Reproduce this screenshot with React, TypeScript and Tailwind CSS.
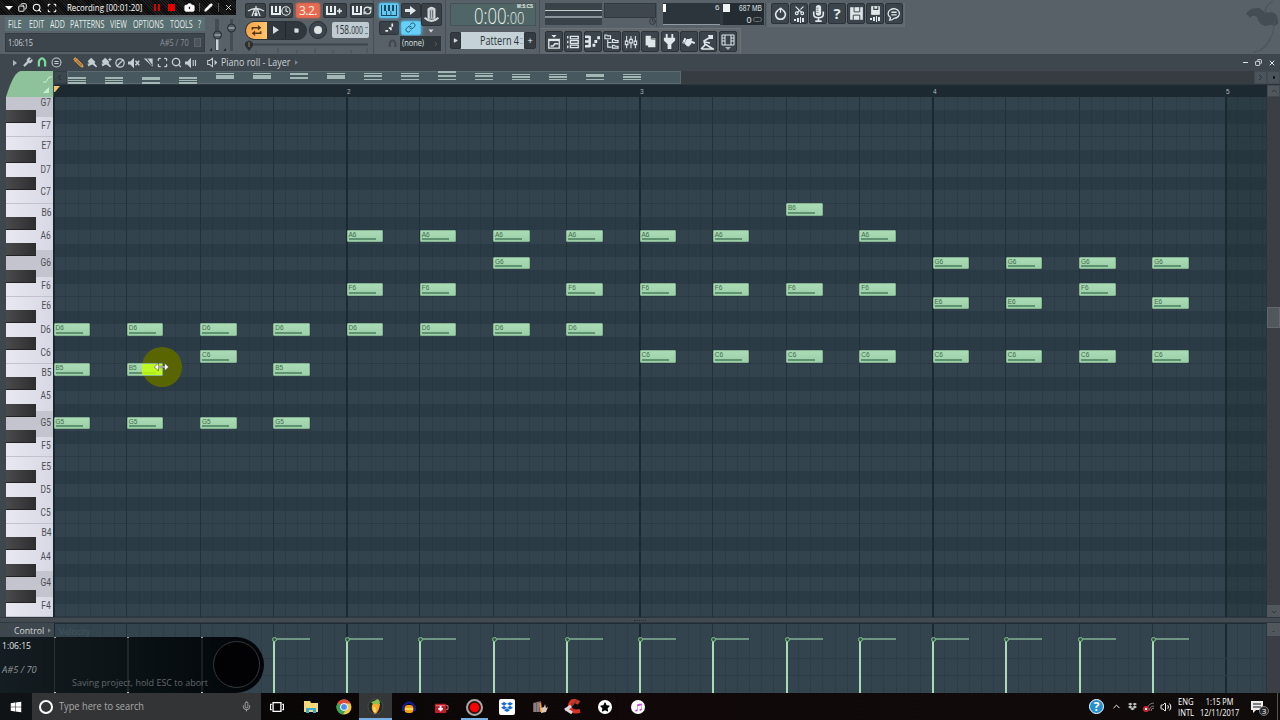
import React from 'react';
import {
  Ban, Camera, ChevronDown, ChevronLeft, ChevronRight, ChevronUp, Copy, Link,
  Mic, Minus, Pencil, Scan, Scissors, Search, Volume2, Wrench, X, Clock, RefreshCw, Play, Square,
} from 'lucide-react';
import { FaDropbox, FaWindows, FaStar, FaItunesNote, FaHandPointRight } from 'react-icons/fa';

const BEAT = 73.25;
const ROW = 13.35;

// semitones counted down from G7, the top row of the roll
const PITCH: Record<string, number> = {
  B6: 8, A6: 10, G6: 12, F6: 14, E6: 15, D6: 17, C6: 19, B5: 20, G5: 24,
};

const CHORDS = [
  'D6 B5 G5', 'D6 B5 G5', 'D6 C6 G5', 'D6 B5 G5',
  'A6 F6 D6', 'A6 F6 D6', 'A6 G6 D6', 'A6 F6 D6',
  'A6 F6 C6', 'A6 F6 C6', 'B6 F6 C6', 'A6 F6 C6',
  'G6 E6 C6', 'G6 E6 C6', 'G6 F6 C6', 'G6 E6 C6',
].map((chord) => chord.split(' '));

const WHITE_KEYS = [
  'G7', 'F7', 'E7', 'D7', 'C7', 'B6', 'A6', 'G6', 'F6', 'E6', 'D6', 'C6',
  'B5', 'A5', 'G5', 'F5', 'E5', 'D5', 'C5', 'B4', 'A4', 'G4', 'F4',
];

const ROWS = Array.from({ length: 39 }, (_, i) => i);
const isBlack = (row: number) => [1, 4, 6, 9, 11].includes(row % 12);

const keyHeight = (name: string, i: number) => {
  if (i === 0) return 1.5 * ROW;
  return ('DAG'.includes(name[0]) ? 2 : 1.5) * ROW;
};

const Narrow = ({ children, className = '' }: { children: React.ReactNode; className?: string }) => (
  <span className={`inline-block origin-left whitespace-nowrap ${className}`}>{children}</span>
);

const Btn = ({ children, className = 'h-[21px] w-[18px] bg-[#3b444b] text-[#dfe7ea]' }: {
  children?: React.ReactNode;
  className?: string;
}) => (
  <div className={`flex shrink-0 items-center justify-center rounded-[2px] border border-[#2b3339] ${className}`}>
    {children}
  </div>
);

const Glyph = ({ children, size = 14, className = '' }: {
  children: React.ReactNode;
  size?: number;
  className?: string;
}) => (
  <svg width={size} height={size} viewBox="0 0 16 16" fill="none" stroke="currentColor" strokeWidth="1.5" className={`shrink-0 ${className}`}>
    {children}
  </svg>
);

const Keys = ({ children }: { children?: React.ReactNode }) => (
  <svg width="18" height="13" viewBox="0 0 18 13" fill="none" stroke="#e6eef0" strokeWidth="1.5">
    <path d="M1 2v8h8V2M5 2v6" strokeWidth="2" />
    {children}
  </svg>
);

const WaveDots = () => (
  <span className="mt-px flex h-[6px] items-center gap-px">
    <i className="h-[2px] w-[2px] bg-[#dfe7ea]" />
    <i className="h-[4px] w-[2px] bg-[#dfe7ea]" />
    <i className="h-[6px] w-[1px] bg-[#dfe7ea]" />
    <i className="h-[4px] w-[2px] bg-[#dfe7ea]" />
  </span>
);

const BrushGlyph = ({ plus }: { plus?: boolean }) => (
  <Glyph size={11}>
    <path d="M1 6l5-5 6 6-1 2 4 5-2 1-5-4-3 1z" fill="currentColor" stroke="none" />
    <path d="M1 10l3 1-2 2" strokeWidth="2" />
    {plus && <path d="M13 1v5M10.500 3.500h5" />}
  </Glyph>
);

const RecorderBar = () => (
  <div className="flex h-[15px] w-[236px] items-center bg-[repeating-linear-gradient(45deg,#090909_0_1px,#202020_1px_2px)] pl-[5px] text-white">
    <div className="flex w-[62px] items-center gap-[5px]">
      <svg width="8" height="6" viewBox="0 0 8 6" fill="white"><path d="M0 1h8L4 5z" /></svg>
      <Copy size={9} strokeWidth={2.5} className="-scale-x-100" />
      <Search size={10} strokeWidth={2.5} />
      <Scan size={10} strokeWidth={2.5} />
    </div>
    <div className="w-[87px] font-[Open_Sans,sans-serif] text-[9.5px] leading-[14px]">
      <Narrow className="scale-x-[.83]">Recording [00:01:20]</Narrow>
    </div>
    <div className="flex w-[14px] gap-[2px]"><i className="h-[7px] w-[2px] bg-[#d90000]" /><i className="h-[7px] w-[2px] bg-[#d90000]" /></div>
    <i className="mr-[9px] h-[7px] w-[7px] bg-[#e60000]" />
    <Camera size={11} fill="white" stroke="white" className="[&>circle]:fill-black" />
    <i className="ml-[4px] h-[9px] w-px bg-[#555]" />
    <Pencil size={9} fill="white" className="ml-[4px]" />
    <i className="ml-[5px] h-[9px] w-px bg-[#555]" />
    <X size={9} className="ml-[5px]" />
  </div>
);

const MENU: [string, string][] = [
  ['FILE', 'w-[21px]'], ['EDIT', 'w-[21px]'], ['ADD', 'w-[20px]'], ['PATTERNS', 'w-[39.5px]'],
  ['VIEW', 'w-[23.5px]'], ['OPTIONS', 'w-[37px]'], ['TOOLS', 'w-[28px]'], ['?', 'w-[5px]'],
];

const MainMenu = () => (
  <div className="flex h-[39px] w-[243px] pl-[5px] pt-[2px]">
    <div className="w-[200px]">
      <div className="flex h-[14px] items-center bg-[#5a6f71] pl-[3px] text-[11px] leading-[14px] text-[#e2ebe9]">
        {MENU.map(([label, width]) => (
          <div key={label} className={width}><Narrow className="scale-x-[.65]">{label}</Narrow></div>
        ))}
      </div>
      <div className="mt-[2px] flex h-[19px] items-center justify-between border border-[#343c43] bg-[#3d454c] px-[2px] text-[9px] text-[#c9d0d3]">
        <Narrow className="scale-x-[.82]">1:06:15</Narrow>
        <div className="flex w-[42px] items-center text-[#8b9398]">
          <div className="w-[34px]"><Narrow className="scale-x-[.82]">A#5 / 70</Narrow></div>
          <i className="h-[9px] w-[7px] shrink-0 border border-[#5c646a] bg-[#4c545a]" />
        </div>
      </div>
    </div>
    <svg width="34" height="36" viewBox="0 0 34 36" className="ml-[3px]">
      <rect x="7" y="2" width="4" height="32" fill="#434c53" />
      <rect x="22" y="2" width="3" height="32" fill="#434c53" />
      <rect x="8" y="20" width="2.500" height="13" fill="#cbd3d6" />
      <circle cx="9.500" cy="18" r="4" fill="#505a61" stroke="#242b31" />
      <circle cx="23.500" cy="11" r="4" fill="#505a61" stroke="#242b31" />
      <path d="M6.500 18h6M20.500 11h6" stroke="#c2cacd" />
      <path d="M2 34v-1l2-2v3zM16 34v-1l2-2v3z" fill="#20282e" />
    </svg>
  </div>
);

const Transport = () => (
  <div className="w-[131px] border-r border-[#474f56] pl-[2px] pt-[3px]">
    <div className="flex gap-[3px]">
      <Btn className="h-[15px] w-[21px] bg-[#3a4248]">
        <svg width="18" height="12" viewBox="0 0 18 12" fill="none" stroke="#dce4e6" strokeWidth="1.300"><path d="M1 6q8-5 16 0M9 1v9M5 11l3-8M13 11l-3-8" /><path d="M7.500 8h3v3h-3z" fill="#dce4e6" stroke="none" /></svg>
      </Btn>
      <Btn className="h-[15px] w-[24px] bg-[#3a4248]"><Keys /><Clock size={10} strokeWidth={2.5} color="#e6eef0" className="-ml-[8px]" /></Btn>
      <Btn className="h-[15px] w-[24px] border-[#d8674f] bg-[#e56a50] text-[12px] tracking-[-.5px] text-[#fff0e2] shadow-[0_0_3px_#d26855]">3.2.</Btn>
      <Btn className="h-[15px] w-[24px] bg-[#3a4248]"><Keys><path d="M11 7h5M13.500 4.500v5" /></Keys></Btn>
      <Btn className="h-[15px] w-[24px] bg-[#3a4248]"><Keys /><RefreshCw size={9} strokeWidth={3} color="#e6eef0" className="-ml-[7px]" /></Btn>
    </div>
    <div className="mt-[2px] flex h-[20px] items-center">
      <div className="flex h-[19px] w-[62px] overflow-hidden rounded-full border border-[#2b3238] bg-[#30383e]">
        <div className="flex w-[21px] items-center justify-center bg-gradient-to-r from-[#f6a348] to-[#ffc66c] text-[#563714]">
          <Glyph size={11}><path d="M2 7V4h8M14 9v3H6" strokeWidth="2.400" /><path d="M10 0l5 4-5 4zM6 8l-5 4 5 4z" fill="currentColor" stroke="none" /></Glyph>
        </div>
        <div className="flex w-[20px] items-center justify-center border-r border-[#20272c]">
          <svg width="6" height="8" viewBox="0 0 6 8" fill="#d8dfe1"><path d="M0 0l6 4-6 4z" /></svg>
        </div>
        <div className="flex w-[20px] items-center justify-center"><Square size={5} fill="#d8dfe1" stroke="#d8dfe1" /></div>
      </div>
      <div className="ml-[2px] flex h-[18px] w-[18px] items-center justify-center rounded-full border border-[#272f35] bg-[#3c454b]"><i className="h-[8px] w-[8px] rounded-full bg-[#dce2e4]" /></div>
      <div className="ml-[5px] flex h-[16px] w-[37px] items-center rounded-[2px] bg-[#bfcbd0] pl-[3px] text-[#273137]">
        <div className="w-[28px] text-[12px] leading-[14px]"><Narrow className="scale-x-[.68]">158.<span className="text-[10px]">000</span></Narrow></div>
        <i className="ml-[2px] h-[7px] w-[3px] border-y border-[#75848b]" />
      </div>
    </div>
    <svg width="126" height="14" viewBox="0 0 126 14">
      <path d="M3 4.500h120" stroke="#3d464c" strokeWidth="2" />
      <path d="M11 13v-3M33 13V8M52 13v-3M70 13V8M88 13v-3M106 13v-3M122 13V8" stroke="#484f56" />
      <path d="M0 3q4-5 8 0v3l-4 5-4-5z" fill="#2b3034" /><path d="M4 2v5" stroke="#a77b4b" />
    </svg>
  </div>
);

const SnapPanel = () => (
  <div className="w-[72px] border-r border-[#474f56] pl-[5px] pt-[3px]">
    <div className="flex h-[33px]">
      <div className="grid w-[42px] grid-cols-2 gap-x-[1px] gap-y-[1px]">
        <Btn className="h-[15px] w-[20px] border-[#52bfe8] bg-[#65c7f0] shadow-[0_0_3px_#58c7fa]">
          <svg width="16" height="11" viewBox="0 0 16 11" fill="#174863"><path d="M0 0h1v11H0zM15 0h1v11h-1zM3 0h2v6H3zM7 0h2v6H7zM11 0h2v6h-2zM0 10h16v1H0zM5 6h.800v4H5zM9.500 6h.800v4h-.800z" /></svg>
        </Btn>
        <Btn className="h-[15px] w-[20px] bg-[#3a4248]"><svg width="11" height="9" viewBox="0 0 11 9" fill="#e3e9eb"><path d="M0 3h5V0l6 4.500L5 9V6H0z" /></svg></Btn>
        <Btn className="h-[14px] w-[20px] bg-[#3a4248] text-[#e3e9eb]"><Glyph size={11}><path d="M2 13h4M7 9h3v3M12 2v5" strokeWidth="2.500" /></Glyph></Btn>
        <Btn className="h-[14px] w-[20px] border-[#55c1eb] bg-[#68cff8] shadow-[0_0_4px_#58c7fa]"><Link size={11} color="#17536b" /></Btn>
      </div>
      <div>
        <Btn className="h-[23px] w-[21px] bg-[#3a4248] text-[#d2d9dc]">
          <Glyph size={17}><path d="M5 12V3q3-3 6 0v9" fill="#bcc6ca" /><path d="M7 4v7M9 4v7" stroke="#697278" strokeWidth="1" /><path d="M1.500 11q6.500 6 13 0" strokeWidth="2" /></Glyph>
        </Btn>
        <svg width="21" height="9" viewBox="0 0 21 9"><path d="M7.500 3.500h5l-2.500 3z" fill="#d7dee0" /></svg>
      </div>
    </div>
    <div className="flex h-[15px] items-center">
      <Glyph size={9} className="ml-[9px] text-[#41494f]"><path d="M3 14V7q5-9 10 0v7" strokeWidth="4" /></Glyph>
      <div className="ml-[3px] flex h-[15px] w-[41px] items-center justify-between bg-[#30373c] px-[2px] text-[8.5px] text-[#dce2e4]">
        <div className="w-[24px]"><Narrow className="scale-x-[.87]">(none)</Narrow></div><ChevronRight size={6} className="text-[#899298]" />
      </div>
    </div>
  </div>
);

const TimePanel = () => (
  <div className="w-[94px] border-r border-[#474f56] pl-[4px] pt-[3px]">
    <div className="relative h-[23px] w-[86px] border border-[#46545a] bg-[#506565] pl-[23px] text-[#e9f3ed]">
      <div className="text-[22px] leading-[22px] font-light"><Narrow className="scale-x-[.76]">0:00<span className="text-[17px]">:00</span></Narrow></div>
      <span className="absolute right-[2px] top-0 font-['Liberation_Sans',sans-serif] text-[4.500px] font-bold leading-[5px]">M:S:CS</span>
    </div>
    <div className="mt-[6px] flex h-[17px] w-[86px]">
      <Btn className="h-[17px] w-[11px] bg-[#343c42]"><Play size={5} fill="#ddd" stroke="#ddd" /></Btn>
      <div className="flex w-[63px] items-center bg-[#c5d2d7] pl-[19px] text-[12px] leading-[16px] text-[#2a353b]">
        <div className="w-[38px]"><Narrow className="scale-x-[.76]">Pattern 4</Narrow></div>
        <i className="ml-[2px] h-[6px] w-[3px] border-y border-[#9dafb6]" />
      </div>
      <Btn className="h-[17px] w-[12px] bg-[#343c42] text-[9px] text-white">+</Btn>
    </div>
  </div>
);

const ToolPanels = () => (
  <div className="w-[365px]">
    <div className="flex h-[28px] items-start pt-[3px]">
      <div className="flex h-[24px] w-[118px] gap-[2px] border-r border-[#474f56] pl-[5px]">
        <div className="h-[22px] w-[57px] bg-[#3a4249] pt-[7px]">
          <div className="h-px bg-[#c3cbce]" /><div className="mt-[5px] h-[2px] bg-[#8b9499]" />
        </div>
        <div className="w-[52px]">
          <div className="h-[15px] border border-[#31393f] bg-[#3e474e]" />
          <div className="flex justify-end"><Clock size={7} strokeWidth={3} color="#2d343a" /></div>
        </div>
      </div>
      <div className="flex h-[23px] w-[109px] border-r border-[#474f56] pl-[6px]">
        <div className="flex h-[22px] w-[101px] bg-[#252c31] text-[9px] leading-[10px] text-[#dce3e5]">
          <div className="flex w-[60px] flex-col justify-between border-r-[3px] border-[#313a41] bg-[#2c353c]">
            <div className="flex justify-between pr-[1px]"><i className="mt-px h-[8px] w-[3px] bg-white" /><span className="font-['Liberation_Sans',sans-serif] text-[8px]">6</span></div>
            <i className="h-px w-full bg-[#8f9ba0]" />
          </div>
          <div className="w-[41px]">
            <div className="flex h-[10px] gap-[8px]">
              <i className="mt-px h-[8px] w-[7px] shrink-0 bg-[#edf1f2]" />
              <svg width="25" height="10" viewBox="0 0 25 10" fill="#dce3e5" className="shrink-0 font-['Liberation_Sans',sans-serif] text-[8.500px]"><text x="1" y="8" textLength="23" lengthAdjust="spacingAndGlyphs">687 MB</text></svg>
            </div>
            <div className="mt-px flex h-[11px] items-center justify-end gap-[2px] pr-[2px]"><span className="font-['Liberation_Sans',sans-serif] text-[9px] leading-[10px]">0</span><i className="h-[5px] w-[9px] rounded-full border border-[#667077]" /></div>
          </div>
        </div>
      </div>
      <div className="ml-[1px] flex h-[24px] w-[138px] shrink-0 gap-[1px] border-r border-b border-[#656d73] bg-[#616a70] pl-[4px]">
        <Btn>
          <Glyph size={13}><path d="M5 4a6 6 0 1 0 6 0" strokeWidth="2" /><path d="M8 1v6M8 1L5 4M8 1l3 3" /></Glyph>
        </Btn>
        <Btn><div className="flex flex-col items-center"><Scissors size={11} strokeWidth={2.5} className="-rotate-90" /><WaveDots /></div></Btn>
        <Btn><Glyph size={17}><rect x="5.500" y="0" width="5" height="10" rx="2.500" fill="currentColor" stroke="none" /><path d="M3.500 6v3q0 3 4.500 3t4.500-3V6M8 12v3M5 15.200h6" /><path d="M6 3h2M6 5h2M6 7h2" stroke="#6a747a" strokeWidth=".800" /></Glyph></Btn>
        <Btn><span className="text-[15px] font-bold leading-none">?</span></Btn>
        <Btn><Glyph size={13}><path d="M1 1h14v14H1z" fill="currentColor" /><path d="M5 0v6h7V0M4 16v-6h8v6" stroke="#3b444b" strokeWidth="1.200" /></Glyph></Btn>
        <Btn><div className="flex flex-col items-center"><Glyph size={9}><path d="M1 1h14v14H1z" fill="currentColor" /><path d="M5 1v5h7V1" stroke="#3b444b" strokeWidth="2" /></Glyph><WaveDots /></div></Btn>
        <Btn><Glyph size={14}><path d="M3 15l1-3a6.500 5.500 0 1 1 4 1q-2 2-5 2zM5 6h6M5 9h6" /></Glyph></Btn>
      </div>
    </div>
    <div className="flex h-[26px] w-[201px] items-center gap-[1.300px] border-t border-r border-[#6b7379] bg-[#60686e] pl-[5px]">
      <Btn><Glyph><path d="M2 5h12v10H2z" /><path d="M2 6h12" strokeWidth="2" /><path d="M4 12.500h3l2-2.500h4" strokeWidth="1.800" /><path d="M5 0h6L8 3z" fill="currentColor" stroke="none" /></Glyph></Btn>
      <Btn><Glyph><path d="M5 1.500h9v3H5zM5 6.500h9v3H5zM5 11.500h9v3H5z" /><path d="M2 1v3M2 6.500v3M2 12v3" /></Glyph></Btn>
      <Btn><Glyph size={15}><path d="M0 3h5M0 8h5M0 13h5M5 2v12" strokeWidth="2.600" /><path d="M8 12h3M10 8h3M13 4h3" strokeWidth="3" /></Glyph></Btn>
      <Btn><Glyph size={15}><path d="M1 5V1h2l1 1h3v3zM4 6v8h4M4 9h4" strokeWidth="1.200" /><path d="M9 9V6h2l1 1h3v2zM9 15v-3h2l1 1h3v2z" strokeWidth="1.200" /></Glyph></Btn>
      <Btn><Glyph><path d="M3 1v14M8 1v14M13 1v14" strokeWidth="1.200" /><path d="M1.500 7h3v4h-3zM6.500 5h3v4h-3zM11.500 7h3v4h-3z" fill="#3b444b" strokeWidth="1.200" /></Glyph></Btn>
      <Btn><Glyph size={13}><path d="M2 1h7v3h5v11H5v-2H2z" fill="currentColor" stroke="none" /><path d="M9 0v5h5" stroke="#3b444b" strokeWidth="1" /></Glyph></Btn>
      <Btn><Glyph size={15}><path d="M4 0h2v4h4V0h2v4h2v3l-4 4v5H6v-5L2 7V4h2z" fill="currentColor" stroke="none" /></Glyph></Btn>
      <Btn><FaHandPointRight size={12} className="rotate-[25deg]" /></Btn>
      <Btn><Glyph size={16}><path d="M8 1h5v4H9z" fill="currentColor" stroke="none" /><path d="M9 4L4 7l1 4-4 4M5 10l8 5M2 15h12M5 8l5 1" strokeWidth="1.600" /></Glyph></Btn>
      <Btn><Glyph size={16}><path d="M2 1h12v10H2zM5 1v10M11 1v10M2 4h3M2 7h3M11 4h3M11 7h3" strokeWidth="1" /><path d="M5 13h6l-3 3z" fill="#aab3b7" stroke="none" /></Glyph></Btn>
    </div>
  </div>
);

const Toolbar = () => (
  <header className="flex h-[54px] bg-[#596168]">
    <div className="w-[243px]">
      <RecorderBar />
      <MainMenu />
    </div>
    <Transport />
    <SnapPanel />
    <TimePanel />
    <ToolPanels />
    <div className="flex flex-1 justify-end">
      <svg width="34" height="54" viewBox="0 0 34 54" fill="#454d54">
        <path d="M0 15q2-8 14-7 5 6 12 4 7 2 6 12l-4 2-3-1-6 1q-7-2-8-9-5-3-7 1l-2-3z" />
        <path d="M27 1q-8 4-8 13M28 22q0 20-15 29l-6 1" fill="none" stroke="#4e565c" strokeWidth="1.200" />
      </svg>
    </div>
  </header>
);

const RollHeader = () => (
  <div className="flex h-[17px] items-center bg-[#3f474e] pl-[13px] pr-[4px] text-[#c3ccd1]">
    <svg width="4" height="6" viewBox="0 0 4 6" fill="#aab4ba"><path d="M0 0l4 3-4 3z" /></svg>
    <div className="ml-[6px] flex w-[46px] gap-[4px]">
      <Wrench size={10} fill="currentColor" />
      <Glyph size={10} className="text-[#7ddb9d]"><path d="M3 15V7q5-10 10 0v8" strokeWidth="3.500" /></Glyph>
      <Glyph size={11}><circle cx="8" cy="8" r="6.500" /><path d="M5 6.500h6M5 9.500h6" /></Glyph>
    </div>
    <div className="ml-[4px] flex w-[134px] items-center gap-[3px]">
      <Pencil size={11} color="#f1ae50" fill="#a87535" className="-scale-x-100" />
      <BrushGlyph />
      <BrushGlyph plus />
      <Ban size={10} strokeWidth={3} className="rotate-90" />
      <Glyph size={12}><path d="M0 6h3l5-5v14l-5-5H0z" fill="currentColor" stroke="none" /><path d="M10 5l5 6M15 5l-5 6" strokeWidth="2" /></Glyph>
      <Glyph size={11}><path d="M1 2h13v12z" fill="currentColor" stroke="none" /><path d="M5 1l8 11" stroke="#3f474e" /></Glyph>
      <Scan size={11} strokeWidth={3} />
      <Search size={11} strokeWidth={3} />
      <Glyph size={12}><path d="M0 6h3l5-5v14l-5-5H0z" fill="currentColor" stroke="none" /><path d="M11 4v8M14 4v8" /></Glyph>
    </div>
    <Glyph size={11}><path d="M1 5h3l4-3v12l-4-3H1z" /><path d="M11 4l4 4-4 4z" fill="currentColor" stroke="none" /></Glyph>
    <div className="ml-[3px] w-[75px] text-[10px] leading-[15px] text-[#c9d1d5]"><Narrow className="scale-x-[.89]">Piano roll - Layer</Narrow></div>
    <svg width="3" height="5" viewBox="0 0 4 6" fill="#7d888f" className="-ml-px"><path d="M0 0l4 3-4 3z" /></svg>
    <div className="ml-auto flex items-center gap-[6px] text-[#dfe5e8]">
      <Minus size={7} strokeWidth={4} /><Copy size={7} strokeWidth={3} className="-scale-x-100" /><X size={8} strokeWidth={3} />
    </div>
  </div>
);

const MiniMap = () => (
  <div className="flex h-[13px]">
    <div className="flex w-[13px] items-center border border-[#333d44] bg-[#3d474e]"><ChevronLeft size={9} color="#161d22" /></div>
    <div className="relative w-[614px] border border-[#5b6a70] bg-[#47585f]">
      {CHORDS.map((chord, beat) =>
        chord.map((note) => (
          <i
            key={`${beat}${note}`}
            className="absolute h-[1.500px] w-[18px] bg-[#a3b8b5]"
            style={{ left: beat * 37 - 0.5, top: (PITCH[note] - 10) * 0.7 + 0.5 }}
          />
        )),
      )}
    </div>
    <div className="flex-1 bg-[#373c43]" />
    <div className="flex w-[13px] items-center justify-center border border-[#414a50] bg-[#4b545a]"><ChevronRight size={9} color="#1d2429" /></div>
    <div className="flex w-[13px] items-center justify-center border border-[#414a50] bg-[#4b545a]"><i className="h-[3px] w-[2px] bg-[#151b1f]" /></div>
  </div>
);

const Ruler = () => (
  <div className="flex h-[13px] border-t border-[#2c363c] bg-[#1c2930] font-['Liberation_Sans',sans-serif] text-[6.500px] leading-[14px] text-[#aab7bc]">
    <div className="w-[293px]"><svg width="7" height="9" viewBox="0 0 7 9"><path d="M0 1h6L1 7H0z" fill="#efc372" /></svg></div>
    {[2, 3, 4].map((bar) => <div key={bar} className="w-[293px]">{bar}</div>)}
    <div className="flex-1">5</div>
    <div className="flex w-[13px] items-center justify-center border border-[#41494f] bg-[#50585e]"><ChevronUp size={8} color="#20282d" /></div>
  </div>
);

const GridLines = () => (
  <>
    {Array.from({ length: 100 }, (_, i) => (
      <i
        key={i}
        className={`absolute inset-y-0 ${i % 24 === 0 ? 'w-[1.500px] bg-[#1a2a32]' : i % 6 === 0 ? 'w-px bg-[#20313a]' : 'w-px bg-[#22333d]/35'}`}
        style={{ left: Math.floor((i * BEAT) / 6 - 0.3) }}
      />
    ))}
  </>
);

const Keyboard = () => (
  <div className="relative h-[521px] w-[47px] overflow-hidden bg-[#e1e1ec]">
    {WHITE_KEYS.map((name, i) => (
      <div
        key={name}
        className={`flex items-center justify-end pr-[2px] font-[Roboto,sans-serif] text-[10.500px] leading-none text-[#4c4e55] ${
          name[0] === 'G' ? 'bg-[#c3c4cd]' : 'bg-gradient-to-r from-[#e8e8f1] to-[#d8d8e5]'
        } ${name[0] === 'F' || name[0] === 'C' ? 'border-b border-[#c1c2cd]' : ''} ${i === 0 ? 'pb-[7px]' : 'pb-px'}`}
        style={{ height: keyHeight(name, i) }}
      >
        <span className="inline-block origin-right scale-x-[.8]">{name}</span>
      </div>
    ))}
    {ROWS.filter(isBlack).map((row) => (
      <i
        key={row}
        className="absolute left-0 h-[13px] w-[30px] border-b border-[#222] bg-gradient-to-r from-[#4a4a4c] to-[#2e2e30]"
        style={{ top: row * ROW - 0.5 }}
      />
    ))}
  </div>
);

const Roll = () => (
  <div className="relative h-[521px] w-[1212px] overflow-hidden bg-[#34434e]">
    {ROWS.map((row) => (
      <div
        key={row}
        className={`${isBlack(row) ? 'bg-[#2b3b46]' : 'bg-[#33434e]'} ${[2, 7, 14, 19, 26, 31, 38].includes(row) ? 'border-b border-[#2b3a45]' : ''}`}
        style={{ height: ROW }}
      />
    ))}
    <GridLines />
    <div className="absolute inset-y-0 left-[1172px] right-0 bg-[#14262c]/25" />
    <div className="absolute left-[88px] top-[250px] h-[40px] w-[40px] rounded-full bg-[#596500]" />
    {CHORDS.map((chord, beat) =>
      chord.map((note) => (
        <div
          key={`${beat}${note}`}
          className="absolute h-[12.500px] w-[36.500px] overflow-hidden rounded-[1px] border border-[#84b18f] bg-gradient-to-b from-[#aadbb6] to-[#9cd0a8] pl-px font-['Liberation_Sans',sans-serif] text-[6.500px] leading-[8px] text-[#3f6b4b]"
          style={{ left: beat * BEAT - 0.5, top: PITCH[note] * ROW - 0.6 }}
        >
          {note}
          <i className="absolute bottom-px left-px h-[2px] w-[27px] bg-[#5f9270]" />
          {beat === 1 && note === 'B5' && <i className="absolute inset-y-0 left-[14px] right-0 bg-[#c5ff00]/80" />}
        </div>
      )),
    )}
    <svg width="15" height="8" viewBox="0 0 16 9" className="absolute left-[100px] top-[266px]">
      <path d="M0 4.500L4.500 0v3.700h7V0L16 4.500 11.500 9V5.300h-7V9z" fill="#fff" stroke="#333" strokeWidth=".6" />
    </svg>
  </div>
);

const ScrollTrack = () => (
  <div className="flex h-[521px] w-[14px] flex-col items-center border-l border-[#2c3438] bg-[#3b3e44]">
    <div className="h-[210px]" />
    <div className="h-[21px] w-[13px] border border-[#60686d] bg-[#50585e]" />
    <div className="flex-1" />
    <div className="flex h-[13px] w-[13px] items-center justify-center bg-[#50585e]"><ChevronDown size={8} color="#20282d" /></div>
  </div>
);

const Velocity = () => (
  <div className="flex h-[70px]">
    <div className="flex h-[15px] w-[48px] shrink-0 items-center pl-[8px] text-[9.500px] leading-[14px] text-[#d0d6d8]">
      <div className="w-[34px]"><Narrow className="scale-x-[.92]">Control</Narrow></div>
      <svg width="3" height="5" viewBox="0 0 4 6" className="shrink-0" fill="#7d888f"><path d="M0 0l4 3-4 3z" /></svg>
    </div>
    <div className="relative w-[1212px] overflow-hidden bg-[#33444f]">
      <GridLines />
      <i className="absolute left-0 right-0 top-0 h-px bg-[#202d35]" />
      <i className="absolute left-0 right-0 top-[35px] h-px bg-[#2c3d47]" />
      <i className="absolute left-0 right-0 top-[52px] h-px bg-[#2c3d47]" />
      <span className="absolute left-[5px] top-[2px] text-[9.500px] leading-[13px] text-[#43545e]"><Narrow className="scale-x-[.92]">Velocity</Narrow></span>
      {CHORDS.map((_, beat) => (
        <div key={beat} className="absolute top-[15px] h-[56px] w-[37px] border-t-2 border-[#6f9684]" style={{ left: Math.round(beat * BEAT - 1) }}>
          <i className="absolute left-0 top-0 h-[56px] w-[2px] bg-[#a9dbb5]" />
          <i className="absolute -left-[1.500px] -top-[3.500px] h-[5px] w-[5px] rounded-full border border-[#83bf91] bg-[#335943]" />
        </div>
      ))}
    </div>
    <div className="w-[14px] border-l border-[#2c3438] bg-[#3b3e44]">
      <div className="flex h-[13px] w-[13px] items-center justify-center bg-[#50585e] text-[8px] text-[#222]">-</div>
    </div>
  </div>
);

const SavingOverlay = () => (
  <div className="absolute bottom-[27px] left-0 flex h-[56px] w-[264px] overflow-hidden rounded-r-full bg-gradient-to-r from-[#141d21] via-[#0b1216] to-[#020508]">
    <div className="w-[55px] border-r border-[#263238] pl-[2px] text-[9.500px] leading-[16px]">
      <div className="pt-px text-[#e1e5e6]"><Narrow className="scale-x-[.9]">1:06:15</Narrow></div>
      <div className="mt-[8px] text-[#92989a]"><Narrow className="scale-x-[.98] italic">A#5 / 70</Narrow></div>
    </div>
    <div className="w-[74px] border-r-2 border-[#1d272a]" />
    <div className="w-[74px] border-r-2 border-[#191f21]" />
    <i className="absolute left-[213px] top-[4px] h-[47px] w-[47px] rounded-full border border-[#38383a] bg-[#020204]" />
    <span className="absolute bottom-[2px] left-[72px] text-[9.500px] leading-[16px] text-[#62686b]"><Narrow className="scale-x-[.945]">Saving project, hold ESC to abort</Narrow></span>
    {[54, 127, 201].map((x) => (
      <React.Fragment key={x}>
        <i className="absolute top-0 h-px w-[2px] bg-[#9aa5a5]" style={{ left: x }} />
        <i className="absolute bottom-0 h-px w-[2px] bg-[#bcc5c5]" style={{ left: x }} />
      </React.Fragment>
    ))}
  </div>
);

const TaskIcon = ({ children, className = '' }: { children: React.ReactNode; className?: string }) => (
  <div className={`flex h-[27px] w-[32.800px] shrink-0 items-center justify-center pt-px ${className}`}>{children}</div>
);

const Taskbar = () => (
  <footer className="flex h-[27px] items-center bg-gradient-to-r from-[#050505] via-[#100809] to-[#100c0b] text-white">
    <div className="flex h-[27px] w-[32px] items-center justify-center bg-[#101315]"><FaWindows size={12} /></div>
    <div className="flex h-[27px] w-[229px] items-center bg-[#333435] pl-[7px]">
      <i className="h-[14px] w-[14px] rounded-full border-2 border-white" />
      <div className="ml-[6px] w-[182px] pt-px text-[10.500px] text-[#a9aaaa]"><Narrow className="scale-x-[.88]">Type here to search</Narrow></div>
      <Mic size={11} color="#aaa" className="shrink-0" />
    </div>
    <TaskIcon><Glyph><path d="M3.500 3h9v10h-9zM2 5H.5v6H2M14 5h1.500v6H14" /></Glyph></TaskIcon>
    <TaskIcon className="pl-[2px]">
      <svg width="16" height="14" viewBox="0 0 16 14"><path d="M1 1h6l1 2h7v9H1z" fill="#f7d979" /><path d="M3 13V8h10v5h-3v-3H6v3z" fill="#39a9d5" /></svg>
    </TaskIcon>
    <TaskIcon className="pl-[2px]">
      <svg width="16" height="16" viewBox="0 0 16 16">
        <circle cx="8" cy="8" r="7.500" fill="#f2c93f" /><path d="M8 8L1.500 4.200A7.500 7.500 0 0 1 14.500 4.500H8z" fill="#df4c3d" /><path d="M1.500 4.200A7.500 7.500 0 0 0 7 15.400L11 9 8 8z" fill="#35a458" />
        <circle cx="8" cy="8" r="3.500" fill="#4a8df0" stroke="#fff" />
      </svg>
    </TaskIcon>
    <TaskIcon className="border-b-2 border-[#78afe2] bg-[#353637]">
      <svg width="17" height="17" viewBox="0 0 17 17"><circle cx="8.500" cy="8.500" r="7.500" fill="#202828" stroke="#49504e" /><path d="M5 7q3-4 8-1-1 8-5 10-4-3-3-9z" fill="#ffa928" /><path d="M7 9l1 5" stroke="#ffe279" strokeWidth="2" /><path d="M6 6L4 4l3-1 4-2 2 3-1 3-3-1z" fill="#8ac04b" /></svg>
    </TaskIcon>
    <TaskIcon>
      <svg width="16" height="14" viewBox="0 0 16 14"><path d="M2 11V7q6-9 12 0v4" stroke="#161e9c" strokeWidth="2" fill="none" /><rect x="3.500" y="5" width="9" height="8" rx="3.500" fill="#f3a01f" /><path d="M4 9h8" stroke="#f6dc57" strokeWidth="2" /></svg>
    </TaskIcon>
    <TaskIcon>
      <svg width="15" height="13" viewBox="0 0 14 14"><path d="M0 3h12v10H0z" fill="#bd1c2d" /><path d="M1 5h10M12 5h2v4h-2" stroke="#e87a7b" fill="none" /><path d="M6 5v6M3.500 8.500h5" stroke="#fff" strokeWidth="2" /></svg>
    </TaskIcon>
    <TaskIcon className="relative">
      <i className="h-[17px] w-[17px] rounded-full border-2 border-[#a7a7a7] bg-[radial-gradient(#f00_45%,#351010_55%)]" />
      <i className="absolute bottom-0 left-[3px] h-[2px] w-[27px] bg-[#78afe2]" />
    </TaskIcon>
    <TaskIcon><div className="flex h-[16px] w-[16px] items-center justify-center rounded-[2px] bg-white text-[#176ccc]"><FaDropbox size={12} /></div></TaskIcon>
    <TaskIcon>
      <svg width="16" height="14" viewBox="0 0 16 14"><path d="M1 3l8-2 2 11H1z" fill="#8b5742" /><path d="M3 3v9M6 2v10" stroke="#7392b1" strokeWidth="1.500" /><path d="M9 8l3-1 1-3 1 4 2-1-2 5-5 1z" fill="#dbcabb" /><path d="M8 3l1 9" stroke="#f1a040" strokeWidth="1.500" /></svg>
    </TaskIcon>
    <TaskIcon>
      <svg width="17" height="16" viewBox="0 0 17 16"><path d="M15 4q-7-5-9 2-1 8 10 6" fill="none" stroke="#d83227" strokeWidth="4" /><path d="M1 11l6-4M2 10l6 4" stroke="#d9dae0" strokeWidth="3" /><path d="M8 7l5-6" stroke="#70453b" strokeWidth="1.500" /></svg>
    </TaskIcon>
    <TaskIcon><div className="flex h-[14px] w-[14px] items-center justify-center rounded-full bg-white text-black"><FaStar size={10} /></div></TaskIcon>
    <TaskIcon><div className="flex h-[14px] w-[14px] items-center justify-center rounded-full bg-white text-[#cb4ddb]"><FaItunesNote size={9} /></div></TaskIcon>
    <div className="ml-auto flex items-center">
      <div className="flex h-[15px] w-[15px] items-center justify-center rounded-full border border-white bg-[#238fcc] text-[12px] font-bold leading-none">?</div>
      <ChevronUp size={11} className="ml-[7px]" />
      <FaDropbox size={9} className="ml-[6px] text-[#c5c5c5]" />
      <svg width="12" height="11" viewBox="0 0 12 11" className="ml-[6px]"><path d="M4 10a7 7 0 0 1 7-8M6 10a5 5 0 0 1 5-5M8 10a3 3 0 0 1 3-3" fill="none" stroke="#777" /><circle cx="3" cy="8" r="3" fill="#d51f31" /><path d="M2 7l2 2M4 7L2 9" stroke="#fff" /></svg>
      <Volume2 size={12} className="ml-[5px]" />
      <div className="ml-[6px] w-[18px] pt-px text-[8.500px] leading-[11.500px]"><Narrow className="scale-x-[.9]">ENG<br />INTL</Narrow></div>
      <div className="ml-[4px] w-[44px] pt-px text-center text-[8.500px] leading-[11.500px]"><Narrow className="scale-x-[.87]">1:15 PM<br />12/11/2017</Narrow></div>
      <div className="relative mr-[14px] ml-[7px]">
        <svg width="12" height="12" viewBox="0 0 12 12"><path d="M0 0h12v9H5l-3 3V9H0z" fill="#eee" /><path d="M2 3h8M2 6h8" stroke="#111" /></svg>
        <i className="absolute -right-[6px] top-[5px] flex h-[10px] w-[10px] items-center justify-center rounded-full border border-[#777] bg-[#272727] text-[8px] not-italic leading-none">3</i>
      </div>
      <i className="mr-[2px] h-[27px] w-px bg-[#555]" />
    </div>
  </footer>
);

const App = () => (
  <div className="relative h-[720px] w-[1280px] overflow-hidden bg-[#3e474e] font-['Open_Sans','Noto_Sans',sans-serif]">
    <Toolbar />
    <RollHeader />
    <div className="flex h-[26px] pl-[6px]">
      <svg width="48" height="26" viewBox="0 0 48 26" className="shrink-0">
        <path d="M0 26Q8 0 15 0h32v26z" fill="#8ec29a" />
        <path d="M37 11h3l3-5h3" stroke="#c6edcf" fill="none" /><path d="M43 16v6h-6z" fill="#c6edcf" />
      </svg>
      <div className="flex w-[1226px] flex-col">
        <MiniMap />
        <Ruler />
      </div>
    </div>
    <main className="flex h-[520px] overflow-hidden pl-[6px]">
      <Keyboard />
      <i className="w-px bg-[#17242a]" />
      <Roll />
      <ScrollTrack />
    </main>
    <div className="flex h-[6px] items-center justify-center border-y border-[#2f383e] bg-[#434b51]">
      <i className="h-px w-[12px] border-t border-dotted border-[#252d33]" />
    </div>
    <div className="pl-[6px]"><Velocity /></div>
    <SavingOverlay />
    <Taskbar />
  </div>
);

export default App;
